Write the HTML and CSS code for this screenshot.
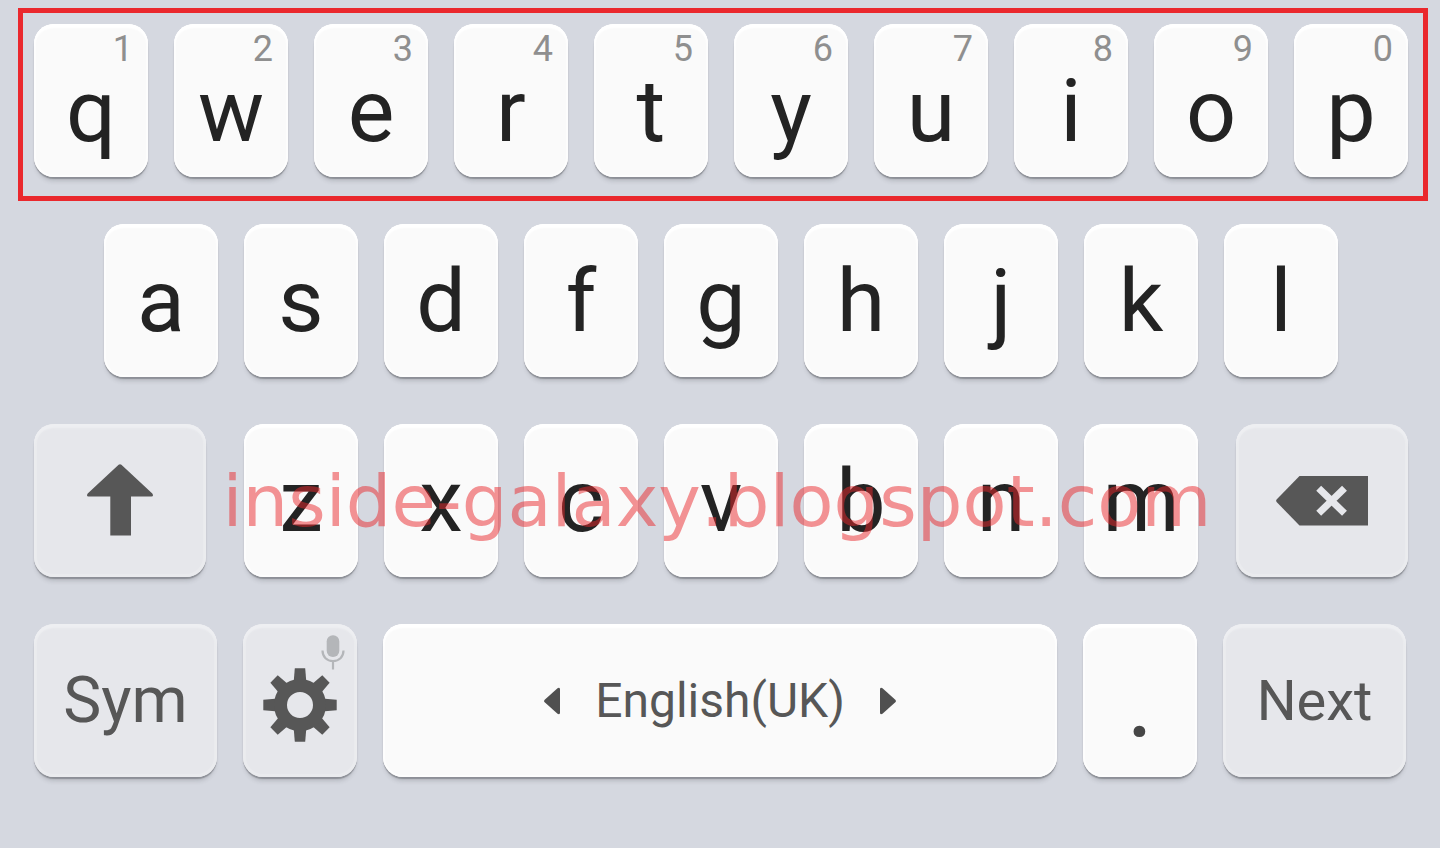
FILE: index.html
```html
<!DOCTYPE html>
<html lang="en-GB">
<head>
<meta charset="utf-8">
<meta name="viewport" content="width=device-width, initial-scale=1">
<title>Keyboard</title>
<link rel="stylesheet" href="styles.css">
</head>
<body>
<main class="keyboard">
  <div class="highlight">
    <div class="row">
      <button class="key dual" type="button">q<span class="hint">1</span></button>
      <button class="key dual" type="button">w<span class="hint">2</span></button>
      <button class="key dual" type="button">e<span class="hint">3</span></button>
      <button class="key dual" type="button">r<span class="hint">4</span></button>
      <button class="key dual" type="button">t<span class="hint">5</span></button>
      <button class="key dual" type="button">y<span class="hint">6</span></button>
      <button class="key dual" type="button">u<span class="hint">7</span></button>
      <button class="key dual" type="button">i<span class="hint">8</span></button>
      <button class="key dual" type="button">o<span class="hint">9</span></button>
      <button class="key dual" type="button">p<span class="hint">0</span></button>
    </div>
  </div>
  <div class="rows">
    <div class="row row-home">
      <button class="key" type="button">a</button>
      <button class="key" type="button">s</button>
      <button class="key" type="button">d</button>
      <button class="key" type="button">f</button>
      <button class="key" type="button">g</button>
      <button class="key" type="button">h</button>
      <button class="key" type="button">j</button>
      <button class="key" type="button">k</button>
      <button class="key" type="button">l</button>
    </div>
    <div class="row row-lower">
      <button class="key soft" type="button" aria-label="Shift">
        <svg width="66" height="74" viewBox="0 0 66 74" fill="#575757" aria-hidden="true"><path d="M31.6 .8Q33-.4 34.4.8L65.300 29.600Q67 32.500 64.500 32.500H44V71.500H23.300V32.500H1.500Q-1 32.500.7 29.600Z"/></svg>
      </button>
      <div class="letters">
        <button class="key" type="button">z</button>
        <button class="key" type="button">x</button>
        <button class="key" type="button">c</button>
        <button class="key" type="button">v</button>
        <button class="key" type="button">b</button>
        <button class="key" type="button">n</button>
        <button class="key" type="button">m</button>
      </div>
      <button class="key soft" type="button" aria-label="Backspace">
        <svg width="92" height="50" viewBox="0 0 92 50" aria-hidden="true"><path fill="#575757" d="M23.500 0H92V49.500H23.500L.6 26Q-.4 24.800.6 23.600Z"/><path d="M42.700 12.200 68.500 37.300M68.500 12.200 42.700 37.300" stroke="#e6e7eb" stroke-width="7"/></svg>
      </button>
      <p class="watermark">inside-galaxy.blogspot.com</p>
    </div>
    <div class="row row-bottom">
      <button class="key soft text-sym" type="button">Sym</button>
      <button class="key soft settings" type="button" aria-label="Settings and voice input">
        <svg class="gear" width="74" height="74" viewBox="-37 -37 74 74" fill="#575757" aria-hidden="true">
          <defs><path id="tooth" d="M-5.200-36.700H5.200L6.400-22H-6.400Z"/></defs>
          <use href="#tooth"/><use href="#tooth" transform="rotate(45)"/><use href="#tooth" transform="rotate(90)"/><use href="#tooth" transform="rotate(135)"/><use href="#tooth" transform="rotate(180)"/><use href="#tooth" transform="rotate(225)"/><use href="#tooth" transform="rotate(270)"/><use href="#tooth" transform="rotate(315)"/>
          <circle r="19.500" fill="none" stroke="#575757" stroke-width="13"/>
        </svg>
        <svg class="mic" width="24" height="35" viewBox="0 0 24 35" aria-hidden="true"><rect x="5.700" y="0.200" width="12.600" height="21.800" rx="6.200" fill="#b4b6b9"/><path d="M1.500 15.500C1.500 22 6 26 12 26S22.500 22 22.500 15.500M12 26V34.500" fill="none" stroke="#b4b6b9" stroke-width="2.200"/></svg>
      </button>
      <button class="key space" type="button">
        <svg width="16" height="28" viewBox="0 0 16 28" fill="#505050" aria-hidden="true"><path d="M16 2V26Q15.500 28 13.500 26.800L.7 15.300Q-.6 14 .7 12.700L13.500 1.200Q15.500 0 16 2Z"/></svg>
        <span>English(UK)</span>
        <svg width="16" height="28" viewBox="0 0 16 28" fill="#505050" aria-hidden="true"><path d="M0 2V26Q.5 28 2.500 26.800L15.300 15.300Q16.600 14 15.300 12.700L2.500 1.200Q.5 0 0 2Z"/></svg>
      </button>
      <button class="key period" type="button">.</button>
      <button class="key soft text-next" type="button">Next</button>
    </div>
  </div>
</main>
</body>
</html>
```
FILE: styles.css
```css
* {
  box-sizing: border-box;
}

body {
  margin: 0;
  min-height: 100vh;
  background: #d5d8e0;
  font-family: Roboto, "Liberation Sans", sans-serif;
}

.keyboard {
  padding: 8px 0 48px;
}

.highlight {
  margin: 0 12px 0 18px;
  padding: 11px 15px 19px 11px;
  border: 5px solid #ea282d;
}

.rows {
  display: grid;
  gap: 47px;
  padding: 23px 32px 0 34px;
}

.row,
.letters {
  display: grid;
  grid-auto-flow: column;
  grid-auto-columns: minmax(0, 1fr);
  gap: 26px;
}

.row-home {
  padding: 0 70px;
}

.row-lower {
  position: relative;
  grid-template-columns: 172fr 954fr 172fr;
  gap: 38px;
}

.row-bottom {
  grid-template-columns: 183fr 114fr 674fr 114fr 183fr;
  padding-right: 2px;
}

.key {
  position: relative;
  display: flex;
  align-items: center;
  justify-content: center;
  min-width: 0;
  height: 153px;
  padding: 0;
  border: 0;
  border-radius: 20px;
  background: #fafafa;
  color: #232323;
  font: 400 88px/88px Roboto, "Liberation Sans", sans-serif;
  box-shadow:
    inset 0 4px 2px #ffffff,
    inset 0 0 0 2px #fdfdfd,
    0 2px 1px rgba(60, 64, 68, 0.35),
    0 6px 4px -2px rgba(60, 64, 68, 0.2);
}

.dual {
  padding-top: 20px;
}

.hint {
  position: absolute;
  top: 7px;
  right: 15px;
  color: #8f8f8f;
  font-size: 36px;
  line-height: 36px;
}

.soft {
  background: #e6e7eb;
  color: #575757;
  box-shadow:
    inset 0 4px 2px #eeeff2,
    inset 0 0 0 3px #eaebee,
    0 2px 1px rgba(60, 64, 68, 0.35),
    0 6px 4px -2px rgba(60, 64, 68, 0.2);
}

.text-sym {
  font-size: 64px;
}

.text-next {
  font-size: 56px;
}

.settings {
  padding-top: 8px;
}

.mic {
  position: absolute;
  top: 11px;
  right: 12px;
}

.space {
  gap: 35px;
  color: #575757;
  font-size: 48px;
}

.period {
  color: #464646;
  font-size: 104px;
}

.watermark {
  position: absolute;
  inset: 0 8px 0 0;
  display: flex;
  align-items: center;
  justify-content: center;
  margin: 0;
  color: rgba(234, 40, 44, 0.5);
  font: 72px/72px "DejaVu Sans", sans-serif;
  font-kerning: none;
  white-space: nowrap;
  pointer-events: none;
}
```
